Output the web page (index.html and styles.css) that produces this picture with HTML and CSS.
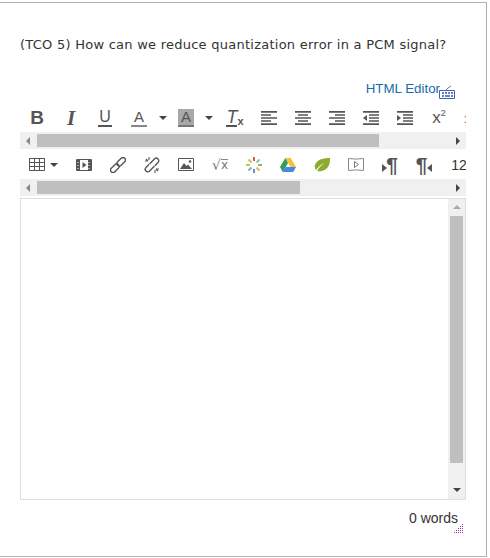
FILE: index.html
```html
<!DOCTYPE html>
<html lang="en">
<head>
<meta charset="utf-8">
<title>Question</title>
<link rel="stylesheet" href="styles.css">
</head>
<body>
<main class="frame">
  <p class="question">(TCO 5) How can we reduce quantization error in a PCM signal?</p>
  <div class="editor-link">
    <a class="html-link">HTML Editor</a>
    <svg class="kbd" width="17" height="15" viewBox="0 0 17 15"><path d="M.5 5.500h15v8H.5z" fill="none" stroke="#3f62b5"/><path d="M7 5l2-2 3-2" fill="none" stroke="#777"/><path d="M3 8h2M6 8h2M9 8h2M12 8h2M3 11h2M6 11h5M12 11h2" stroke="#2f5aa8" stroke-width="1.500"/></svg>
  </div>

  <div class="toolbar">
    <span class="btn glyph bold">B</span>
    <span class="btn glyph italic">I</span>
    <span class="btn glyph under"><span class="under-mark">U</span></span>
    <span class="btn glyph colour"><span class="letter">A</span></span>
    <span class="caret-btn"><i class="caret"></i></span>
    <span class="btn glyph colour"><span class="letter shaded">A</span></span>
    <span class="caret-btn wide"><i class="caret"></i></span>
    <span class="btn glyph clear"><span class="tee">T</span><span class="sub-x">x</span></span>
    <span class="btn"><svg class="icon" viewBox="0 0 16 14"><path d="M0 .8h16M0 4h10M0 7h16M0 10h10M0 13.200h16" stroke="#555" stroke-width="1.700"/></svg></span>
    <span class="btn"><svg class="icon" viewBox="0 0 16 14"><path d="M0 .8h16M3 4h10M0 7h16M3 10h10M0 13.200h16" stroke="#555" stroke-width="1.700"/></svg></span>
    <span class="btn"><svg class="icon" viewBox="0 0 16 14"><path d="M0 .8h16M6 4h10M0 7h16M6 10h10M0 13.200h16" stroke="#555" stroke-width="1.700"/></svg></span>
    <span class="btn"><svg class="icon" viewBox="0 0 16 14"><path d="M0 .8h16M6 4h10M6 7h10M6 10h10M0 13.200h16" stroke="#555" stroke-width="1.700"/><path d="M4 4v6L0 7z" fill="#555"/></svg></span>
    <span class="btn"><svg class="icon" viewBox="0 0 16 14"><path d="M0 .8h16M6 4h10M6 7h10M6 10h10M0 13.200h16" stroke="#555" stroke-width="1.700"/><path d="M0 4v6l4-3z" fill="#555"/></svg></span>
    <span class="btn glyph sup">x<sup>2</sup></span>
    <span class="btn more">:</span>
  </div>
  <div class="hscroll"><i class="arrow-left"></i><span class="thumb thumb-one"></span><i class="arrow-right"></i></div>

  <div class="toolbar second">
    <span class="btn"><svg class="icon" width="16" height="13" viewBox="0 0 16 13"><path d="M.5.500h15v12H.5zM5.500.5v12M10.500.5v12M.5 4.500h15M.5 8.500h15" fill="none" stroke="#555"/><path d="M0 0h16v1H0z" fill="#555"/></svg></span>
    <span class="caret-btn"><i class="caret"></i></span>
    <span class="btn"><svg class="icon" width="16" height="12" viewBox="0 0 16 12"><path d="M.5.500h15v11H.5z" fill="none" stroke="#555"/><path d="M1 1h3v10H1zM12 1h3v10h-3z" fill="#555"/><path d="M2 3v1M2 6v1M2 9v1M13 3v1M13 6v1M13 9v1" stroke="#fff"/><path d="M6.500 3v6L10.500 6z" fill="#555"/></svg></span>
    <span class="btn"><svg class="icon" width="16" height="16" viewBox="0 0 16 16"><g transform="rotate(-45 8 8)" fill="none" stroke="#555" stroke-width="1.400"><rect x="-1.500" y="5.500" width="10" height="5" rx="2.500"/><rect x="7.500" y="5.500" width="10" height="5" rx="2.500"/></g></svg></span>
    <span class="btn"><svg class="icon" width="16" height="16" viewBox="0 0 16 16"><g transform="rotate(-45 8 8)" fill="none" stroke="#555" stroke-width="1.400"><path d="M6.500 5.500H2a2.500 2.500 0 0 0 0 5h6a2.500 2.500 0 0 0 1-.2"/><path d="M9.500 10.500H14a2.500 2.500 0 0 0 0-5H8a2.500 2.500 0 0 0-1 .2"/></g><path d="M5 0v3M1 4h3M2 2l2 2M11 16v-3M15 12h-3M14 14l-2-2" fill="none" stroke="#555" stroke-width="1.100"/></svg></span>
    <span class="btn"><svg class="icon" width="16" height="13" viewBox="0 0 16 13"><path d="M.5.500h15v12H.5z" fill="none" stroke="#555"/><path d="M2 11l4-6 2.500 3L10 6.500 14 11z" fill="#555"/><circle cx="12" cy="3.500" r="1.300" fill="#555"/></svg></span>
    <span class="btn glyph sqrt">√<span class="sqrt-x">x</span></span>
    <span class="btn"><svg class="icon" width="16" height="16" viewBox="0 0 16 16" stroke-width="2"><path d="M8 0v4" stroke="#e0584f"/><path d="M8 12v4" stroke="#6b8ec4"/><path d="M0 8h4" stroke="#b8c94f"/><path d="M12 8h4" stroke="#7fb98a"/><path d="M2.500 2.500l3 3" stroke="#cfc24f"/><path d="M13.500 2.500l-3 3" stroke="#8fc1a0"/><path d="M2.500 13.500l3-3" stroke="#6fb6d8"/><path d="M13.500 13.500l-3-3" stroke="#efb04a"/></svg></span>
    <span class="btn"><svg class="icon" width="16" height="14" viewBox="0 0 16 14"><path d="M5.300 0h5.400l5.300 9h-5.400z" fill="#f4c430"/><path d="M5.300 0L0 9l2.700 5L8 5z" fill="#2f9e5b"/><path d="M2.700 14h10.600L16 9H5.400z" fill="#4a86e8"/></svg></span>
    <span class="btn"><svg class="icon" width="16" height="14" viewBox="0 0 16 14"><path d="M16 0C10 0 3 1 1 7c-.6 2 0 4 1 5C5 8 8 6 11 4.500 8 7 5 9 3 13c5 1 10-1 12-6 1-2 1-5 1-7z" fill="#8dac2f"/></svg></span>
    <span class="btn"><svg class="icon" width="16" height="13" viewBox="0 0 16 13"><path d="M.5.500q7.500 1.200 15 0v12q-7.500-1.200-15 0z" fill="none" stroke="#888"/><path d="M6.500 3.500v6l4-3z" fill="none" stroke="#777"/></svg></span>
    <span class="btn glyph para"><i class="para-left"></i>¶</span>
    <span class="btn glyph para">¶<i class="para-right"></i></span>
    <span class="btn size">12</span>
  </div>
  <div class="hscroll"><i class="arrow-left"></i><span class="thumb thumb-two"></span><i class="arrow-right"></i></div>

  <div class="editor">
    <div class="body-area"></div>
    <div class="vscroll"><i class="arrow-up"></i><span class="vthumb"></span><i class="arrow-down"></i></div>
  </div>
  <div class="status">
    <span class="count">0 words</span>
    <svg class="grip" width="10" height="10" viewBox="0 0 10 10"><path d="M8 0h1v1H8zM6 2h1v1H6zM8 2h1v1H8zM4 4h1v1H4zM6 4h1v1H6zM8 4h1v1H8zM2 6h1v1H2zM4 6h1v1H4zM6 6h1v1H6zM8 6h1v1H8zM0 8h1v1H0zM2 8h1v1H2zM4 8h1v1H4zM6 8h1v1H6zM8 8h1v1H8z" fill="#a12ea8"/></svg>
  </div>
</main>
</body>
</html>
```
FILE: styles.css
```css
html, body { margin: 0; padding: 0; background: #fff; }
.frame {
  box-sizing: border-box;
  width: 487px;
  height: 555px;
  margin-top: 2px;
  border-top: 1px solid #b0b0b0;
  border-right: 1px solid #b0b0b0;
  border-bottom: 1px solid #b0b0b0;
  padding: 0 20px;
  font-family: "Liberation Sans", Arial, sans-serif;
  overflow: hidden;
}
.question {
  margin: 0;
  padding-top: 32px;
  height: 47px;
  font: 13px/20px "DejaVu Sans", Verdana, sans-serif;
  letter-spacing: 0.25px;
  color: #333;
  white-space: nowrap;
}
.editor-link {
  display: flex;
  justify-content: flex-end;
  align-items: flex-start;
  height: 22px;
  padding-right: 11px;
  margin-top: -2px;
  margin-bottom: 2px;
  margin-right: -1px;
}
.html-link { font-size: 13.33px; line-height: 18px; color: #1a6bad; }
.kbd { margin-top: 5px; margin-left: -1px; }
.toolbar {
  display: flex;
  width: 446px;
  height: 28px;
  overflow: hidden;
  align-items: center;
  color: #555;
}
.toolbar.second { height: 30px; padding-top: 1px; box-sizing: border-box; }
.btn {
  flex: 0 0 34px;
  height: 24px;
  display: flex;
  align-items: center;
  justify-content: center;
}
.icon { width: 16px; height: auto; display: block; }
.caret-btn {
  flex: 0 0 13px;
  display: flex;
  justify-content: center;
}
.caret-btn.wide { flex-basis: 15px; justify-content: flex-start; padding-left: 2px; box-sizing: border-box; }
.caret { border: 4px solid transparent; border-top: 4px solid #444; border-bottom: 0; display: block; }
.second .caret-btn { margin-left: -7px; margin-right: 7px; }
.glyph { font-family: "Liberation Sans", Arial, sans-serif; }
.bold { font-size: 19px; font-weight: 700; color: #555; }
.italic { font-family: "Liberation Serif", serif; font-size: 21px; font-style: italic; font-weight: 700; color: #555; }
.under { font-size: 15px; }
.under-mark {
  display: block;
  width: 14px;
  height: 15px;
  line-height: 13px;
  text-align: center;
  border-bottom: 2px solid #555;
  font-size: 16px;
  font-weight: 400;
}
.colour { font-size: 15px; }
.letter {
  display: block;
  width: 16px;
  height: 16px;
  line-height: 15px;
  text-align: center;
  border-bottom: 2px solid #888;
}
.letter.shaded { background: #a9a9a9; border-bottom-color: #777; }
.clear { font-size: 18px; }
.tee {
  font-family: "Liberation Sans", sans-serif;
  font-style: italic;
  border-bottom: 2px solid #555;
  line-height: 15px;
  height: 15px;
  width: 11px;
  display: block;
}
.sub-x { font-size: 11px; font-weight: 700; line-height: 1; align-self: flex-end; margin-bottom: 3px; }
.sup { font-size: 17px; }
.sup sup { font-size: 9px; line-height: 1; align-self: flex-start; vertical-align: baseline; margin-top: 3px; }
.more { color: #b86b1c; font-size: 13px; justify-content: flex-end; flex-basis: 11px; }
.sqrt { font-family: "DejaVu Sans", sans-serif; font-size: 14px; color: #777; }
.sqrt-x { font-size: 12px; border-top: 1px solid #888; line-height: 11px; }
.para { font-size: 21px; font-weight: 700; color: #555; }
.para-left { border: 4px solid transparent; border-left: 5px solid #555; border-right: 0; margin-right: -1px; margin-top: 6px; }
.para-right { border: 4px solid transparent; border-right: 5px solid #555; border-left: 0; margin-top: 6px; }
.size { font-size: 14px; color: #333; flex: 0 0 16px; margin-left: 10px; }
.hscroll {
  display: flex;
  align-items: center;
  width: 446px;
  height: 17px;
  background: #f0f0f0;
}
.arrow-left { border: 4px solid transparent; border-right: 4px solid #888; border-left: 0; margin-left: 6px; }
.arrow-right { border: 4px solid transparent; border-left: 4px solid #444; border-right: 0; margin-left: auto; margin-right: 6px; }
.thumb { height: 13px; background: #bfbfbf; margin-left: 7px; }
.thumb-one { width: 342px; }
.thumb-two { width: 263px; }
.editor {
  box-sizing: border-box;
  display: flex;
  width: 446px;
  height: 302px;
  margin-top: 2px;
  border: 1px solid #ddd;
  background: #fff;
}
.body-area { flex: 1; }
.vscroll {
  flex: 0 0 17px;
  background: #f0f0f0;
  display: flex;
  flex-direction: column;
  align-items: center;
}
.arrow-up { border: 4px solid transparent; border-bottom: 4px solid #aaa; border-top: 0; margin-top: 6px; }
.vthumb { width: 13px; height: 247px; background: #bfbfbf; margin-top: 7px; }
.arrow-down { border: 4px solid transparent; border-top: 4px solid #444; border-bottom: 0; margin-top: auto; margin-bottom: 7px; }
.status { position: relative; height: 40px; width: 446px; text-align: right; }
.count {
  position: absolute;
  right: 8px;
  top: 10px;
  font-size: 14px;
  line-height: 16px;
  color: #333;
}
.grip { position: absolute; left: 434px; top: 24px; }
```
